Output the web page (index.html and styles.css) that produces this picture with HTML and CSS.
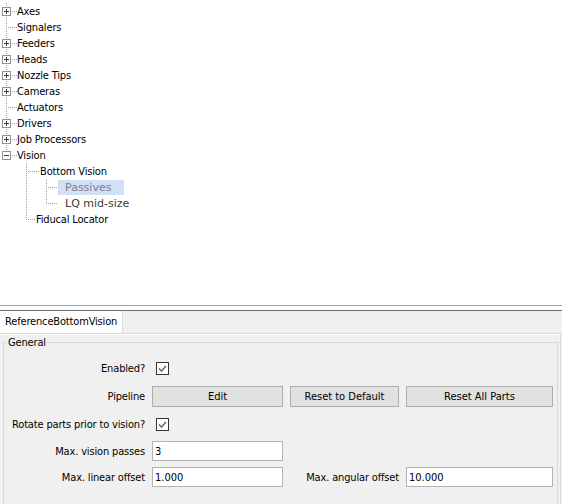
FILE: index.html
```html
<!DOCTYPE html>
<html lang="en">
<head>
    <meta charset="UTF-8">
    <title>Machine Setup - Bottom Vision</title>
    <link rel="stylesheet" href="styles.css">
</head>
<body>

    <div class="tree">
        <div class="row"><span class="ln top"><i class="box plus"></i></span><span class="label">Axes</span></div>
        <div class="row"><span class="ln top"></span><span class="label">Signalers</span></div>
        <div class="row"><span class="ln top"><i class="box plus"></i></span><span class="label">Feeders</span></div>
        <div class="row"><span class="ln top"><i class="box plus"></i></span><span class="label">Heads</span></div>
        <div class="row"><span class="ln top"><i class="box plus"></i></span><span class="label">Nozzle Tips</span></div>
        <div class="row"><span class="ln top"><i class="box plus"></i></span><span class="label">Cameras</span></div>
        <div class="row"><span class="ln top"></span><span class="label">Actuators</span></div>
        <div class="row"><span class="ln top"><i class="box plus"></i></span><span class="label">Drivers</span></div>
        <div class="row"><span class="ln top"><i class="box plus"></i></span><span class="label">Job Processors</span></div>
        <div class="row"><span class="ln top last"><i class="box"></i></span><span class="label">Vision</span></div>

        <div class="row"><span class="ln ind"></span><span class="ln br"></span><span class="label">Bottom Vision</span></div>
        <div class="row"><span class="ln ind"></span><span class="ln pass"></span><span class="ln br2"></span><span class="tag selected">Passives</span></div>
        <div class="row"><span class="ln ind"></span><span class="ln pass"></span><span class="ln br2 end"></span><span class="tag">LQ mid-size</span></div>
        <div class="row"><span class="ln ind"></span><span class="ln br end short"></span><span class="label">Fiducal Locator</span></div>
    </div>

    <div class="divider"></div>

    <div class="tabs">
        <div class="tab">ReferenceBottomVision</div>
    </div>

    <div class="panel">
        <fieldset class="group">
            <legend>General</legend>
            <div class="form">
                <label class="lbl">Enabled?</label>
                <span class="check"><svg width="13" height="13" viewBox="0 0 13 13"><rect x="0.5" y="0.5" width="12" height="12" fill="#fff" stroke="#333"/><path d="M3 6.5l2.5 2.5 4.5-5" fill="none" stroke="#5a5a5a" stroke-width="1.3"/></svg></span>

                <label class="lbl">Pipeline</label>
                <button class="btn">Edit</button>
                <button class="btn">Reset to Default</button>
                <button class="btn">Reset All Parts</button>

                <label class="lbl">Rotate parts prior to vision?</label>
                <span class="check"><svg width="13" height="13" viewBox="0 0 13 13"><rect x="0.5" y="0.5" width="12" height="12" fill="#fff" stroke="#333"/><path d="M3 6.5l2.5 2.5 4.5-5" fill="none" stroke="#5a5a5a" stroke-width="1.3"/></svg></span>

                <label class="lbl">Max. vision passes</label>
                <input class="field" type="text" value="3">

                <label class="lbl">Max. linear offset</label>
                <input class="field" type="text" value="1.000">
                <label class="lbl lbl-right">Max. angular offset</label>
                <input class="field" type="text" value="10.000">
            </div>
        </fieldset>
    </div>

</body>
</html>
```

FILE: styles.css
```css
body {
    margin: 0;
    font: 11px "DejaVu Sans Condensed", "DejaVu Sans", sans-serif;
    letter-spacing: -0.16px;
    color: #000;
    background: #f0f0f0;
}

/* ---- tree ---- */

.tree {
    --dv: repeating-linear-gradient(to bottom, #a0a0a0 0 1px, transparent 1px 2px);
    --dh: repeating-linear-gradient(to right, #a0a0a0 0 1px, transparent 1px 2px);
    height: 302px;
    padding-top: 3px;
    background: #fff;
}

    .tree .row {
        display: flex;
        height: 16px;
        line-height: 16px;
        white-space: nowrap;
    }

    .tree .label {
        padding-top: 1px;
    }

    .tree .ln {
        flex: none;
        height: 16px;
        box-sizing: border-box;
        display: flex;
        align-items: flex-start;
    }

    .tree .top {
        width: 17px;
        padding: 4px 0 0 2px;
        background: var(--dv) 6px 0 / 1px 16px no-repeat, var(--dh) 6px 8px / 11px 1px no-repeat;
    }

    .tree .top.last {
        background: var(--dv) 6px 0 / 1px 9px no-repeat, var(--dh) 6px 8px / 11px 1px no-repeat;
    }

    .tree .box {
        width: 9px;
        height: 9px;
        box-sizing: border-box;
        border: 1px solid #919191;
        background: linear-gradient(#233f73, #233f73) center / 5px 1px no-repeat, #fff;
    }

    .tree .box.plus {
        background: linear-gradient(#233f73, #233f73) center / 5px 1px no-repeat,
                    linear-gradient(#233f73, #233f73) center / 1px 5px no-repeat, #fff;
    }

    .tree .ind {
        width: 26px;
    }

    .tree .br {
        width: 14px;
        background: var(--dv) 0 0 / 1px 16px no-repeat, var(--dh) 0 8px / 14px 1px no-repeat;
    }

    .tree .br.end {
        background: var(--dv) 0 0 / 1px 9px no-repeat, var(--dh) 0 8px / 14px 1px no-repeat;
    }

    .tree .br.short {
        width: 10px;
    }

    .tree .pass {
        width: 20px;
        background: var(--dv) 0 0 / 1px 16px no-repeat;
    }

    .tree .br2 {
        width: 12px;
        background: var(--dv) 0 0 / 1px 16px no-repeat, var(--dh) 0 8px / 12px 1px no-repeat;
    }

    .tree .br2.end {
        background: var(--dv) 0 0 / 1px 9px no-repeat, var(--dh) 0 8px / 12px 1px no-repeat;
    }

    .tree .tag {
        font-family: "DejaVu Sans", sans-serif;
        letter-spacing: 0;
        color: #3c3c3c;
        padding-left: 7px;
        height: 15px;
        line-height: 16px;
        align-self: flex-end;
    }

    .tree .tag.selected {
        width: 66px;
        box-sizing: border-box;
        background: #d1e0f4;
        color: #7b7f95;
    }

/* ---- split divider + tab ---- */

.divider {
    height: 4px;
    background: #fff;
    border-top: 1px solid #a0a0a0;
    border-bottom: 1px solid #6b6b6b;
}

.tabs {
    display: flex;
    height: 22px;
}

.tab {
    width: 123px;
    box-sizing: border-box;
    padding-left: 5px;
    line-height: 22px;
    background: #fff;
    border-right: 1px solid #d9d9d9;
}

.panel {
    margin-right: 1px;
    padding: 2px 2px 0 3px;
    border-top: 1px solid #d9d9d9;
    border-right: 1px solid #d9d9d9;
    box-shadow: inset 0 1px #fff;
}

.group {
    margin: 0;
    padding: 0 0 20px 0;
    border: 1px solid #d9d9d9;
}

    .group legend {
        margin-left: 3px;
        padding: 0 1px;
        line-height: 13px;
    }

/* ---- form grid ---- */

.form {
    margin-top: 5px;
    display: grid;
    grid-template-columns: 141px 131px 109px 147px;
    grid-template-rows: 28px 28px 28px 26px 26px;
    column-gap: 7px;
    align-items: center;
}

    .form .lbl {
        grid-column: 1;
        justify-self: end;
        white-space: nowrap;
    }

    .form .lbl-right {
        grid-column: 3;
    }

    .form .check {
        justify-self: start;
        margin-left: 4px;
        height: 13px;
    }

        .form .check svg {
            display: block;
        }

    .form .btn {
        height: 21px;
        margin: 0;
        padding: 0;
        font: inherit;
        color: #000;
        background: #e1e1e1;
        border: 1px solid #adadad;
    }

    .form .field {
        height: 20px;
        box-sizing: border-box;
        margin: 0;
        padding: 0 2px;
        font: inherit;
        color: #000;
        background: #fff;
        border: 1px solid #b4b4b4;
        outline: none;
    }
```
